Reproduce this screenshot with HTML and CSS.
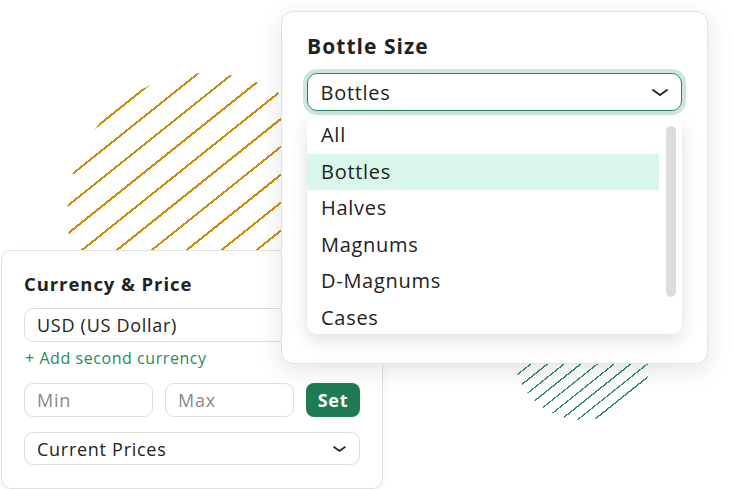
FILE: index.html
```html
<!DOCTYPE html>
<html lang="en">
<head>
<meta charset="utf-8">
<title>Filters</title>
<link rel="stylesheet" href="styles.css">
</head>
<body>
<div class="stage">
  <div class="hatch hatch-gold"></div>
  <div class="hatch hatch-green"></div>

  <section class="card price-card">
    <h2 class="price-title">Currency &amp; Price</h2>
    <div class="field">USD (US Dollar)</div>
    <a class="add-link" href="#">+ Add second currency</a>
    <div class="price-row">
      <input class="field input" type="text" placeholder="Min">
      <input class="field input" type="text" placeholder="Max">
      <button class="set-btn" type="button">Set</button>
    </div>
    <div class="field select-small">
      <span>Current Prices</span>
      <svg class="chev-small" width="13" height="6" viewBox="0 0 13 6"><polyline points="1,1 6.5,5 12,1" fill="none" stroke="#222" stroke-width="1.6" stroke-linecap="round" stroke-linejoin="round"/></svg>
    </div>
  </section>

  <section class="card size-card">
    <h2 class="size-title">Bottle Size</h2>
    <div class="select-focus">
      <span>Bottles</span>
      <svg class="chev" width="16" height="7" viewBox="0 0 16 7"><polyline points="1,1 8,6 15,1" fill="none" stroke="#222" stroke-width="1.8" stroke-linecap="round" stroke-linejoin="round"/></svg>
    </div>
    <div class="dropdown">
      <ul class="options">
        <li>All</li>
        <li class="active">Bottles</li>
        <li>Halves</li>
        <li>Magnums</li>
        <li>D-Magnums</li>
        <li>Cases</li>
      </ul>
      <div class="scroll-track"><div class="scroll-thumb"></div></div>
    </div>
  </section>
</div>
</body>
</html>
```

FILE: styles.css
```css
html, body {
  margin: 0;
  padding: 0;
  background: #ffffff;
}

body {
  font-family: "Open Sans", "Noto Sans", sans-serif;
  color: #222222;
  letter-spacing: 0.045em;
}

.stage {
  position: relative;
  width: 734px;
  height: 489px;
  overflow: hidden;
}

.hatch {
  position: absolute;
  border-radius: 50%;
}

.hatch-gold {
  left: 67px;
  top: 73px;
  width: 280px;
  height: 280px;
  background: repeating-linear-gradient(141.34deg,
    transparent 0 15.8px,
    #c8900c 15.8px 17.9px,
    transparent 17.9px 21.8px);
}

.hatch-green {
  left: 513px;
  top: 280px;
  width: 140px;
  height: 140px;
  background: repeating-linear-gradient(141.34deg,
    transparent 0 3.2px,
    #2e8b62 3.2px 4.5px,
    transparent 4.5px 10.4px);
}

.card {
  position: absolute;
  box-sizing: border-box;
  background: #ffffff;
  border: 1px solid #e2e2e2;
}

/* Currency & Price card */
.price-card {
  left: 1px;
  top: 250px;
  width: 382px;
  border-radius: 10px;
  padding: 21px 22px 23px;
  z-index: 1;
  display: flex;
  flex-direction: column;
  box-shadow: 0 2px 8px rgba(0, 0, 0, 0.04);
}

.price-title {
  margin: 0 0 12px;
  font-size: 18.5px;
  line-height: 24px;
  font-weight: 700;
  letter-spacing: 0.05em;
}

.field {
  box-sizing: border-box;
  height: 34px;
  border: 1px solid #dedede;
  border-radius: 9px;
  display: flex;
  align-items: center;
  padding: 0 12px;
  font-size: 18px;
  color: #222222;
  background: #ffffff;
}

.add-link {
  margin-top: 5px;
  font-size: 16px;
  line-height: 22px;
  color: #2a8a5f;
  text-decoration: none;
  padding-left: 1px;
  letter-spacing: 0.035em;
}

.price-row {
  margin-top: 14px;
  display: grid;
  grid-template-columns: 1fr 1fr 54px;
  gap: 12px;
  height: 34px;
}

.input {
  width: 100%;
  min-width: 0;
  font-family: inherit;
  letter-spacing: inherit;
  outline: none;
}

.input::placeholder {
  color: #8a8a8a;
}

.set-btn {
  border: 0;
  border-radius: 8px;
  background: #1e7b55;
  color: #ffffff;
  font-family: inherit;
  letter-spacing: inherit;
  font-weight: 700;
  font-size: 18px;
  padding: 0;
}

.select-small {
  margin-top: 15px;
  height: 33px;
  justify-content: space-between;
  padding-right: 13px;
}

/* Bottle Size card */
.size-card {
  left: 281px;
  top: 11px;
  width: 427px;
  border-radius: 12px;
  padding: 20px 25px 29px;
  z-index: 2;
  box-shadow: 0 6px 26px rgba(0, 0, 0, 0.11);
}

.size-title {
  margin: 0 0 13px;
  font-size: 21px;
  line-height: 28px;
  font-weight: 700;
  letter-spacing: 0.05em;
}

.select-focus {
  box-sizing: border-box;
  height: 38px;
  border: 1.5px solid #2b7f59;
  border-radius: 10px;
  box-shadow: 0 0 0 4px #cfe7db;
  display: flex;
  align-items: center;
  justify-content: space-between;
  padding: 0 13px 0 12.5px;
  font-size: 20px;
}

.dropdown {
  margin-top: 6px;
  height: 217px;
  display: flex;
  background: #ffffff;
  border-radius: 10px;
  box-shadow: 0 6px 18px rgba(0, 0, 0, 0.13);
  overflow: hidden;
}

.options {
  list-style: none;
  margin: 0;
  padding: 0;
  width: 352px;
  flex: none;
}

.options li {
  height: 36.5px;
  line-height: 35px;
  padding-left: 14px;
  font-size: 20px;
}

.options li.active {
  background: #d9f6ea;
}

.scroll-track {
  width: 10px;
  margin: 9px 6px 0 7px;
  flex: none;
}

.scroll-thumb {
  height: 171px;
  background: #dcdcdc;
  border-radius: 5px;
}
```
